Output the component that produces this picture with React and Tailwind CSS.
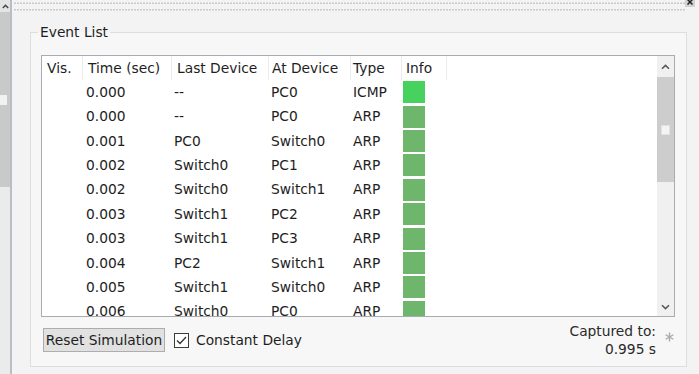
import React from "react";

const rows = [
  ["0.000", "--", "PC0", "ICMP", true],
  ["0.000", "--", "PC0", "ARP"],
  ["0.001", "PC0", "Switch0", "ARP"],
  ["0.002", "Switch0", "PC1", "ARP"],
  ["0.002", "Switch0", "Switch1", "ARP"],
  ["0.003", "Switch1", "PC2", "ARP"],
  ["0.003", "Switch1", "PC3", "ARP"],
  ["0.004", "PC2", "Switch1", "ARP"],
  ["0.005", "Switch1", "Switch0", "ARP"],
  ["0.006", "Switch0", "PC0", "ARP"],
];

function Caret({ down = false }) {
  return (
    <svg width="9" height="6" viewBox="0 0 9 6">
      <path
        d={down ? "M1 1.2 L4.5 4.6 L8 1.2" : "M1 4.8 L4.5 1.4 L8 4.8"}
        fill="none"
        stroke="#5a5a5a"
        strokeWidth="1.6"
      />
    </svg>
  );
}

export default function App() {
  return (
    <div className="w-[699px] h-[374px] flex overflow-hidden bg-[#f3f3f3] text-[#1e1e1e] font-['DejaVu_Sans',sans-serif] text-[13.8px]">
      {/* left scroll strip */}
      <div className="w-[12px] flex flex-col border-r-2 border-[#b9bdc4]">
        <div className="h-[12px] bg-[#e4e4e4] flex items-center justify-center">
          <svg width="7" height="5" viewBox="0 0 7 5">
            <path d="M0.8 4 L3.5 1.2 L6.2 4" fill="none" stroke="#444" strokeWidth="1.4" />
          </svg>
        </div>
        <div className="h-[175px] bg-[#c9c9c9] flex items-center">
          <div className="w-[7px] h-[10px] bg-[#f2f2f2]" />
        </div>
        <div className="flex-1 bg-[#ebebeb]" />
      </div>

      {/* main */}
      <div className="flex-1 flex flex-col">
        <div className="h-[12px] relative pl-[2px] pr-[14px]">
          <svg width="100%" height="12">
            <defs>
              <pattern id="dots" width="3" height="12" patternUnits="userSpaceOnUse">
                <rect x="0" y="2.5" width="2" height="1.5" fill="#cacaca" />
                <rect x="0" y="9" width="2" height="1.5" fill="#cacaca" />
              </pattern>
            </defs>
            <rect width="100%" height="12" fill="url(#dots)" />
          </svg>
          <div className="absolute right-[4px] top-[-3px] w-[10px] h-[10px] bg-[#d2d2d2] flex items-center justify-center">
            <svg width="6" height="6" viewBox="0 0 6 6">
              <path d="M0.5 0.5 L5.5 5.5 M5.5 0.5 L0.5 5.5" stroke="#222" strokeWidth="1.5" />
            </svg>
          </div>
        </div>

        <fieldset className="flex-1 mt-[12px] ml-[18px] mr-[12px] mb-[7px] border border-[#dedede] bg-[#f7f7f7] pl-[10px] pr-[11px] pt-[14px] flex flex-col min-w-0">
          <legend className="ml-[-3px] px-[2px] leading-[17px]">Event List</legend>

          <div className="h-[262px] border border-[#a8acb2] bg-white flex">
            <div className="flex-1 overflow-hidden">
              <div className="h-[24px] flex">
                <div className="w-[41px] border-r border-[#ebebeb] pl-[5px] flex items-center">Vis.</div>
                <div className="w-[89px] border-r border-[#ebebeb] pl-[5px] flex items-center">Time (sec)</div>
                <div className="w-[97px] border-r border-[#ebebeb] pl-[5px] flex items-center">Last Device</div>
                <div className="w-[82px] border-r border-[#ebebeb] pl-[3px] flex items-center">At Device</div>
                <div className="w-[51px] border-r border-[#ebebeb] pl-[2px] flex items-center">Type</div>
                <div className="w-[45px] border-r border-[#ebebeb] pl-[4px] flex items-center">Info</div>
              </div>
              {rows.map((r, i) => (
                <div key={i} className="h-[24.4px] flex items-center">
                  <div className="w-[41px]" />
                  <div className="w-[89px] pl-[3px]">{r[0]}</div>
                  <div className="w-[97px] pl-[2px]">{r[1]}</div>
                  <div className="w-[82px] pl-[2px]">{r[2]}</div>
                  <div className="w-[51px] pl-[2px]">{r[3]}</div>
                  <div className="w-[45px] pl-[1px] flex items-center">
                    <div className={r[4] ? "w-[22px] h-[22px] bg-[#47d15f]" : "w-[22px] h-[22px] bg-[#6db66b]"} />
                  </div>
                </div>
              ))}
            </div>
            <div className="w-[17px] flex flex-col bg-[#f0f0f0]">
              <div className="h-[21px] flex items-center justify-center">
                <Caret />
              </div>
              <div className="h-[105px] bg-[#cdcdcd] flex items-center justify-center">
                <div className="w-[9px] h-[10px] bg-[#f4f4f4] border border-[#e2e2e2]" />
              </div>
              <div className="flex-1" />
              <div className="h-[19px] flex items-center justify-center">
                <Caret down />
              </div>
            </div>
          </div>

          <div className="mt-[6px] flex items-start">
            <button className="mt-[5px] ml-[2px] w-[122px] h-[24px] bg-[#e1e1e1] border border-[#adadad] flex items-center justify-center text-[#1e1e1e]">
              Reset Simulation
            </button>
            <div className="mt-[5px] h-[24px] ml-[9px] flex items-center">
              <div className="w-[15px] h-[15px] border border-[#3c3c3c] bg-white flex items-center justify-center">
                <svg width="11" height="9" viewBox="0 0 11 9">
                  <path d="M1 4.5 L4 7.5 L10 1" fill="none" stroke="#333" strokeWidth="1.3" />
                </svg>
              </div>
              <span className="ml-[7px]">Constant Delay</span>
            </div>
            <div className="ml-auto text-right leading-[17.5px] text-[#2a2a2a]">
              <div>Captured to:</div>
              <div>0.995 s</div>
            </div>
            <div className="ml-[9px] mr-[1px] mt-[9px]">
              <svg width="9" height="10" viewBox="0 0 9 10">
                <path d="M4.5 0.5 V9.5 M0.6 2.75 L8.4 7.25 M8.4 2.75 L0.6 7.25" stroke="#ababab" strokeWidth="1.4" />
              </svg>
            </div>
          </div>
        </fieldset>
      </div>
    </div>
  );
}
